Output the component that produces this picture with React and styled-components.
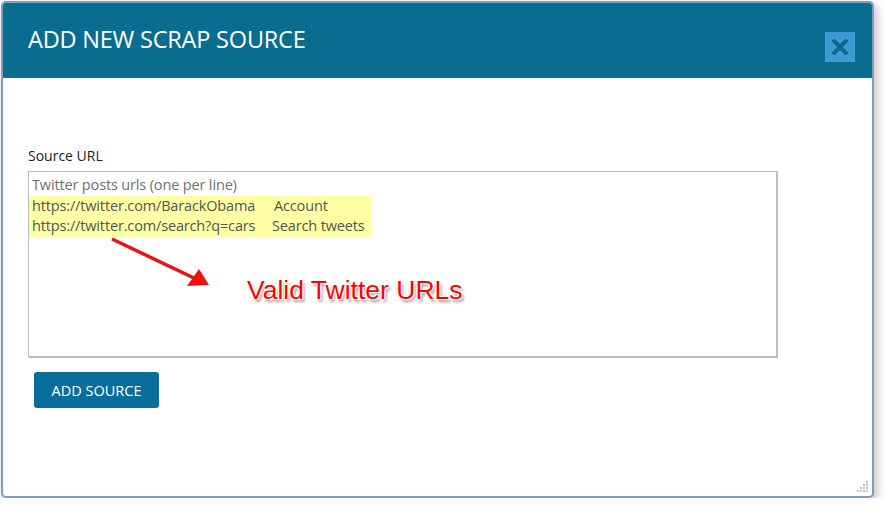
import React from "react";
import styled, { createGlobalStyle } from "styled-components";

const Global = createGlobalStyle`
  html, body { margin: 0; padding: 0; background: #fff; }
  body { font-family: "Open Sans", "Noto Sans", Arial, sans-serif; }
`;

const Dialog = styled.div`
  box-sizing: border-box;
  margin: 1px 0 0 1px;
  width: 873px;
  height: 497px;
  border: 2px solid #7d9cc6;
  border-radius: 5px;
  background: #fff;
  box-shadow: 3px 4px 10px rgba(0, 0, 0, 0.25);
  display: flex;
  flex-direction: column;
  position: relative;
  overflow: hidden;
`;

const Header = styled.div`
  height: 75px;
  background: #0a6d8f;
  display: flex;
  align-items: flex-start;
  justify-content: space-between;
  padding: 0 17px 0 25px;
  flex-shrink: 0;
`;

const Title = styled.h1`
  margin: 20px 0 0;
  font-size: 23.5px;
  font-weight: 400;
  color: #fff;
  letter-spacing: -0.2px;
`;

const Close = styled.button`
  margin-top: 29px;
  width: 30px;
  height: 30px;
  border: none;
  padding: 0;
  background: #3c9bd2;
  display: flex;
  align-items: center;
  justify-content: center;
`;

const Body = styled.div`
  padding: 68px 0 0 25px;
  display: flex;
  flex-direction: column;
`;

const Label = styled.label`
  font-size: 14px;
  color: #222;
  margin-bottom: 6px;
`;

const FieldWrap = styled.div`
  position: relative;
  width: 750px;
`;

const Field = styled.div`
  box-sizing: border-box;
  width: 750px;
  height: 187px;
  border: 1px solid #bdbdbd;
  border-right-width: 2px;
  border-bottom-width: 2px;
  padding: 3px 0 0 0;
  font-size: 14.5px;
  line-height: 20.5px;
  letter-spacing: -0.15px;
`;

const Line = styled.div`
  padding-left: 3px;
  color: ${(p) => (p.$muted ? "#707070" : "#555")};
  background: ${(p) => (p.$hl ? "#ffffa3" : "transparent")};
  width: ${(p) => (p.$hl ? "339px" : "auto")};
  white-space: pre;
`;

const Tag = styled.span`
  display: inline-block;
  width: ${(p) => p.$w}px;
`;

const Note = styled.div`
  position: absolute;
  left: 219px;
  top: 104px;
  font-family: "Liberation Sans", Arial, sans-serif;
  font-size: 26.5px;
  color: #ff0000;
  text-shadow: -1px -1px 0 #fff, 1px -1px 0 #fff, -1px 1px 0 #fff, 1px 1px 0 #fff,
    2px 3px 3px rgba(0, 0, 0, 0.45);
`;

const Arrow = styled.svg`
  position: absolute;
  left: 80px;
  top: 64px;
`;

const Button = styled.button`
  margin: 14px 0 0 6px;
  align-self: flex-start;
  width: 125px;
  height: 36px;
  border: none;
  border-radius: 3px;
  background: #0a6e9c;
  color: #fff;
  font-family: "Open Sans", "Noto Sans", Arial, sans-serif;
  font-size: 14.5px;
`;

const Grip = styled.svg`
  position: absolute;
  right: 3px;
  bottom: 3px;
`;

export default function App() {
  return (
    <>
      <Global />
      <Dialog>
        <Header>
          <Title>ADD NEW SCRAP SOURCE</Title>
          <Close aria-label="close">
            <svg width="18" height="18" viewBox="0 0 18 18">
              <path d="M3 3 L15 15 M15 3 L3 15" stroke="#0d6a8e" strokeWidth="4" strokeLinecap="round" />
            </svg>
          </Close>
        </Header>
        <Body>
          <Label>Source URL</Label>
          <FieldWrap>
            <Field>
              <Line $muted>Twitter posts urls (one per line)</Line>
              <Line $hl>
                <Tag $w={242}>https://twitter.com/BarackObama</Tag>Account
              </Line>
              <Line $hl>
                <Tag $w={240}>https://twitter.com/search?q=cars</Tag>Search tweets
              </Line>
            </Field>
            <Arrow width="110" height="60" viewBox="0 0 110 60">
              <path d="M4 4 L88 44" stroke="#ee1111" strokeWidth="3.5" />
              <polygon points="101,50 79,51 91,34" fill="#ee1111" />
            </Arrow>
            <Note>Valid Twitter URLs</Note>
          </FieldWrap>
          <Button>ADD SOURCE</Button>
        </Body>
        <Grip width="12" height="12" viewBox="0 0 12 12">
          {[[9, 0], [6, 3], [9, 3], [3, 6], [6, 6], [9, 6], [0, 9], [3, 9], [6, 9], [9, 9]].map(([x, y]) => (
            <rect key={x + "-" + y} x={x} y={y} width="2" height="2" fill="#b8c4d8" />
          ))}
        </Grip>
      </Dialog>
    </>
  );
}
